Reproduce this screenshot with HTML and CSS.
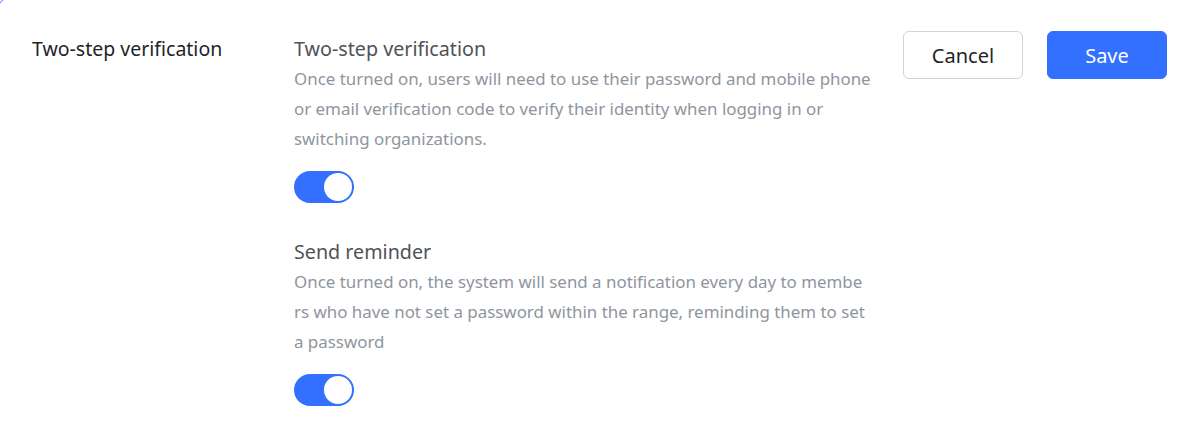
FILE: index.html
```html
<!DOCTYPE html>
<html>
<head>
<meta charset="utf-8">
<link rel="stylesheet" href="styles.css">
</head>
<body>
<div class="corner"></div>
<div class="page">
  <div class="label">Two-step verification</div>
  <div class="content">
    <section class="setting">
      <div class="title">Two-step verification</div>
      <p class="desc">Once turned on, users will need to use their password and mobile phone or email verification code to verify their identity when logging in or switching organizations.</p>
      <div class="switch"><span class="knob"></span></div>
    </section>
    <section class="setting">
      <div class="title">Send reminder</div>
      <p class="desc desc-break">Once turned on, the system will send a notification every day to members who have not set a password within the range, reminding them to set a password</p>
      <div class="switch"><span class="knob"></span></div>
    </section>
  </div>
  <div class="actions">
    <button class="btn btn-cancel">Cancel</button>
    <button class="btn btn-save">Save</button>
  </div>
</div>
</body>
</html>
```
FILE: styles.css
```css
html, body {
  margin: 0;
  padding: 0;
  background: #fff;
}
body {
  font-family: "Noto Sans", "Open Sans", sans-serif;
  width: 1190px;
  height: 431px;
  overflow: hidden;
  position: relative;
}
.corner {
  position: absolute;
  left: -2px;
  top: -2px;
  width: 12px;
  height: 12px;
  border: 1.5px solid #6d9bff;
  border-radius: 10px 0 0 0;
  border-right: none;
  border-bottom: none;
}
.page {
  display: flex;
  align-items: flex-start;
  padding: 34px 23px 0 32px;
}
.label {
  width: 262px;
  font-size: 19.5px;
  line-height: 30px;
  color: #1f2329;
  flex: none;
}
.content {
  width: 577px;
  margin-right: 5px;
  flex: none;
}
.setting {
  margin-bottom: 34px;
}
.title {
  font-size: 19.7px;
  line-height: 30px;
  color: #4e535a;
}
.desc {
  margin: 0;
  font-size: 16.9px;
  line-height: 30px;
  color: #8f959e;
}
.desc-break {
  max-width: 573px;
  word-break: break-all;
}
.switch {
  margin-top: 17px;
  width: 60px;
  height: 32px;
  border-radius: 16px;
  background: #3370ff;
  display: flex;
  align-items: center;
  justify-content: flex-end;
  padding: 0 2px;
  box-sizing: border-box;
}
.knob {
  width: 28px;
  height: 28px;
  border-radius: 50%;
  background: #fff;
}
.actions {
  margin-left: auto;
  margin-top: -3px;
  display: flex;
  gap: 24px;
}
.btn {
  width: 120px;
  height: 48px;
  border-radius: 6px;
  font-family: inherit;
  font-size: 20px;
  cursor: pointer;
  padding: 0;
}
.btn-cancel {
  background: #fff;
  border: 1px solid #d0d3d6;
  color: #1f2329;
}
.btn-save {
  background: #3370ff;
  border: 1px solid #3370ff;
  color: #fff;
}
```
